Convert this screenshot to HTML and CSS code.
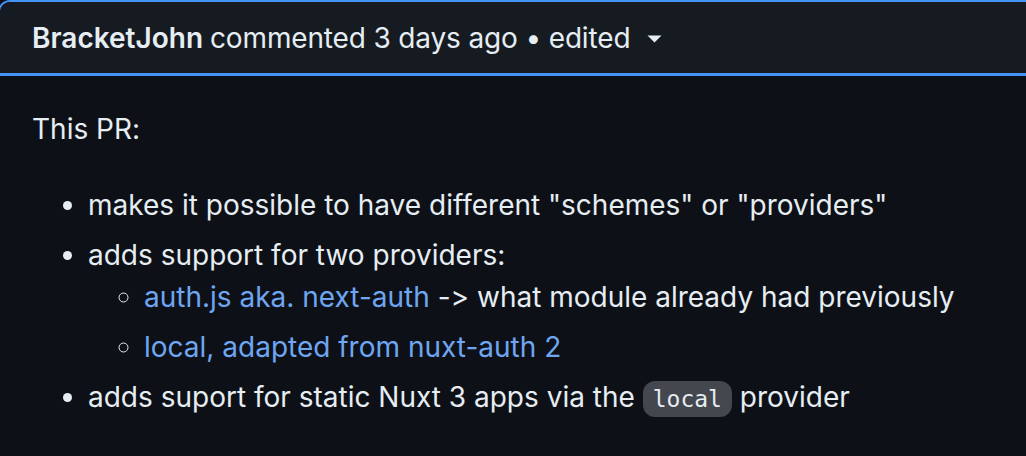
FILE: index.html
```html
<!DOCTYPE html>
<html lang="en">
<head>
<meta charset="utf-8">
<title>Comment</title>
<link rel="stylesheet" href="styles.css">
</head>
<body>
<div class="comment">
  <div class="comment-header">
    <span class="author">BracketJohn</span>
    <span class="meta">commented 3 days ago • edited</span>
    <svg class="caret" width="15" height="8" viewBox="0 0 15 8"><path d="M0.5 0.5h14L7.5 7.5z" fill="#e6edf3"/></svg>
  </div>
  <div class="comment-body">
    <p>This PR:</p>
    <ul class="list">
      <li>makes it possible to have different "schemes" or "providers"</li>
      <li>adds support for two providers:
        <ul class="sublist">
          <li><a href="#">auth.js aka. next-auth</a> -&gt; what module already had previously</li>
          <li><a href="#">local, adapted from nuxt-auth 2</a></li>
        </ul>
      </li>
      <li>adds suport for static Nuxt 3 apps via the <code>local</code> provider</li>
    </ul>
  </div>
</div>
</body>
</html>
```
FILE: styles.css
```css
html, body {
  margin: 0;
  padding: 0;
  background: #0d1117;
}
body {
  font-family: Inter, "Noto Sans", sans-serif;
  font-variant-ligatures: none;
  font-feature-settings: "calt" 0, "liga" 0;
  color: #e6edf3;
  font-size: 28px;
  overflow: hidden;
}
.comment {
  margin-left: -2px;
  width: 1060px;
  border: 2px solid #4493f8;
  border-bottom: none;
  border-radius: 12px 12px 0 0;
}
.comment-header {
  height: 71px;
  padding: 0 32px;
  display: flex;
  align-items: center;
  background: #161b22;
  border-bottom: 3px solid #4493f8;
  border-radius: 10px 10px 0 0;
  font-size: 28px;
}
.author {
  font-weight: 600;
}
.meta {
  margin-left: 7px;
  letter-spacing: -0.15px;
}
.caret {
  margin-left: 17px;
  margin-top: 3px;
}
.comment-body {
  padding: 32px 32px;
  line-height: 42px;
}
.comment-body p {
  margin: 0 0 34px;
}
.list {
  margin: 0;
  padding-left: 56px;
  list-style: disc;
}
.list > li + li {
  margin-top: 8px;
}
.sublist {
  margin: 0;
  padding-left: 56px;
  list-style: circle;
}
.sublist > li + li {
  margin-top: 8px;
}
a {
  color: #6fa6f2;
  text-decoration: none;
}
code {
  font-family: "DejaVu Sans Mono", monospace;
  font-size: 23px;
  background: #44474e;
  padding: 5px 10px;
  border-radius: 12px;
}
```
